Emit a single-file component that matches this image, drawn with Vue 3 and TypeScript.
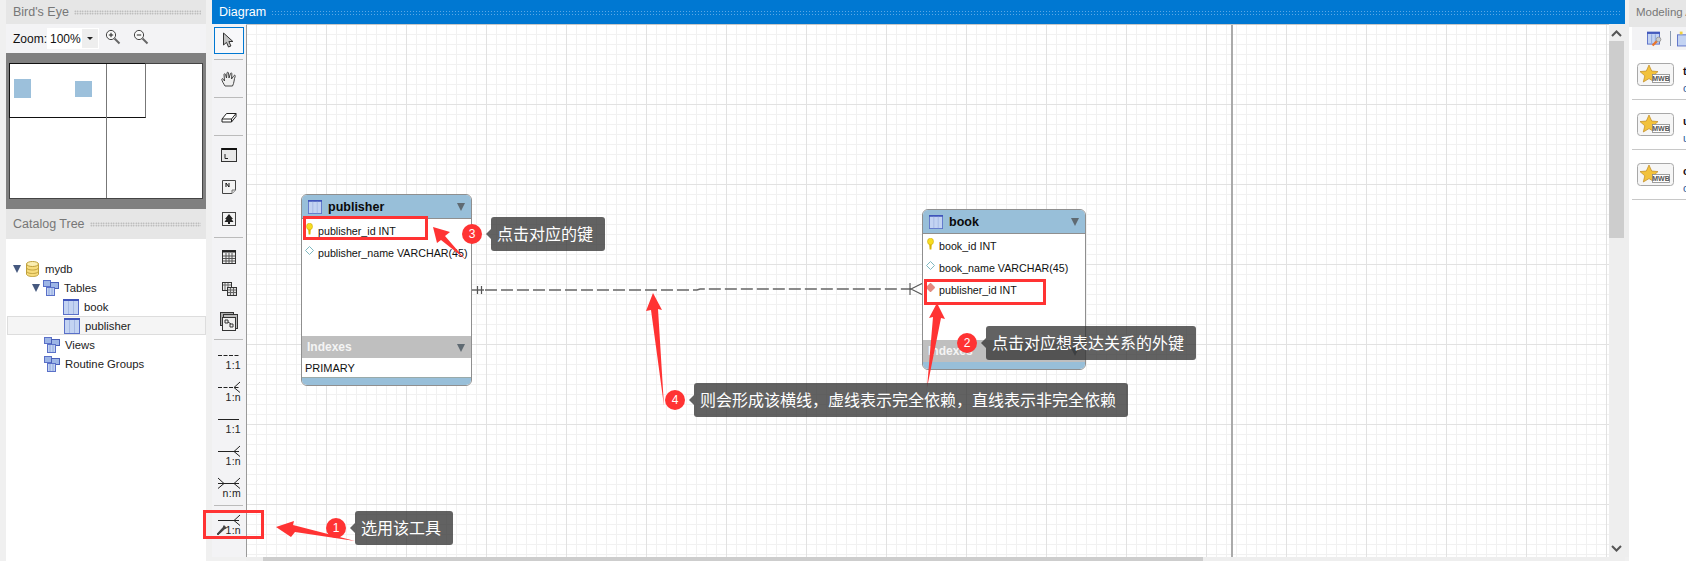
<script setup lang="ts">
interface Column { name: string; kind: 'key' | 'plain' | 'fk' }
interface TableNode { name: string; cls: string; columns: Column[]; indexes: string[] }

const tables: TableNode[] = [
  {
    name: 'publisher', cls: 'node-publisher',
    columns: [
      { name: 'publisher_id INT', kind: 'key' },
      { name: 'publisher_name VARCHAR(45)', kind: 'plain' },
    ],
    indexes: ['PRIMARY'],
  },
  {
    name: 'book', cls: 'node-book',
    columns: [
      { name: 'book_id INT', kind: 'key' },
      { name: 'book_name VARCHAR(45)', kind: 'plain' },
      { name: 'publisher_id INT', kind: 'fk' },
    ],
    indexes: [],
  },
]

const tips = [
  { n: 1, cls: 'tip-1', text: '选用该工具' },
  { n: 2, cls: 'tip-2', text: '点击对应想表达关系的外键' },
  { n: 3, cls: 'tip-3', text: '点击对应的键' },
  { n: 4, cls: 'tip-4', text: '则会形成该横线\uFF0C虚线表示完全依赖\uFF0C直线表示非完全依赖' },
]

const relations = [
  { label: '1:1', dashed: true, right: false, left: false },
  { label: '1:n', dashed: true, right: true, left: false },
  { label: '1:1', dashed: false, right: false, left: false },
  { label: '1:n', dashed: false, right: true, left: false },
  { label: 'n:m', dashed: false, right: true, left: true },
]

const additions = [
  { title: 'timestamps', sub: 'create_time' },
  { title: 'user', sub: 'username' },
  { title: 'category', sub: 'category_id' },
]
</script>

<template>
  <div class="app">
    <svg width="0" height="0" class="defs">
      <defs>
        <symbol id="tbl" viewBox="0 0 16 16">
          <rect x="0.5" y="0.5" width="15" height="15" fill="#c3d3f2" stroke="#5a70c8" />
          <rect x="0" y="0" width="16" height="2" fill="#3f55bb" />
          <path d="M5.5 2v13M10.5 2v13" stroke="#a4b8e4" fill="none" />
        </symbol>
        <symbol id="group" viewBox="0 0 16 16">
          <rect x="0.5" y="0.5" width="7" height="6" fill="#9db5e6" stroke="#5a70c8" />
          <rect x="7.5" y="2.500" width="8" height="6" fill="#9db5e6" stroke="#4a60b8" />
          <rect x="3.500" y="7.500" width="8" height="8" fill="#c3d3f2" stroke="#5a70c8" />
          <path d="M6 8v7M9 8v7" stroke="#8ea6dc" />
        </symbol>
        <symbol id="star-btn" viewBox="0 0 37 23">
          <rect x="0.5" y="0.5" width="36" height="22" rx="3" fill="#f6f6f6" stroke="#a8a8a8" />
          <path d="M12 2l2.700 6 6.300.6-4.800 4.200 1.500 6.200L12 15.600 6.300 19l1.500-6.200L3 8.600 9.300 8z" fill="#f2c23c" stroke="#c08a20" stroke-width="0.7" />
          <rect x="15.500" y="11.500" width="17" height="8" fill="#fff" stroke="#888" stroke-width="0.8" />
          <text x="24" y="18.300" text-anchor="middle" font-size="7" font-weight="700" fill="#555" font-family="Liberation Sans, sans-serif">MWB</text>
        </symbol>
      </defs>
    </svg>

    <aside class="left">
      <header class="panel-head"><span>Bird's Eye</span><i class="dots"></i></header>
      <div class="zoom-row">
        <span class="zoom-label">Zoom:</span>
        <div class="zoom-select"><span>100%</span><b class="zoom-btn"></b></div>
        <svg class="mag" width="16" height="16" viewBox="0 0 16 16">
          <circle cx="6" cy="6" r="4.600" fill="#f8f8f8" stroke="#444" />
          <path d="M3.800 6h4.400M6 3.800v4.400" stroke="#222" />
          <path d="M9.500 9.500l5 5" stroke="#666" stroke-width="2" />
        </svg>
        <svg class="mag mag-2" width="16" height="16" viewBox="0 0 16 16">
          <circle cx="6" cy="6" r="4.600" fill="#f8f8f8" stroke="#444" />
          <path d="M3.800 6h4.400" stroke="#222" />
          <path d="M9.500 9.500l5 5" stroke="#666" stroke-width="2" />
        </svg>
      </div>
      <div class="eye">
        <div class="eye-page">
          <i class="eye-view"></i>
          <i class="eye-fold"></i>
          <i class="eye-a"></i>
          <i class="eye-b"></i>
        </div>
      </div>
      <header class="panel-head tree-head"><span>Catalog Tree</span><i class="dots"></i></header>
      <div class="tree">
        <div class="row l0">
          <i class="tri"></i>
          <svg width="13" height="16" viewBox="0 0 13 16">
            <path d="M.5 3v10c0 1.500 2.600 2.500 6 2.500s6-1 6-2.500V3z" fill="#f7dc7c" stroke="#bfa03c" />
            <ellipse cx="6.500" cy="3" rx="6" ry="2.500" fill="#fbeeb0" stroke="#bfa03c" />
            <path d="M.5 6.500c0 1.500 2.600 2.500 6 2.500s6-1 6-2.500M.5 10c0 1.500 2.600 2.500 6 2.500s6-1 6-2.500" fill="none" stroke="#bfa03c" />
          </svg>
          <span>mydb</span>
        </div>
        <div class="row l1">
          <i class="tri"></i>
          <svg width="16" height="16"><use href="#group" /></svg>
          <span>Tables</span>
        </div>
        <div class="row l2"><svg width="16" height="16"><use href="#tbl" /></svg><span>book</span></div>
        <div class="row l2 selected"><svg width="16" height="16"><use href="#tbl" /></svg><span>publisher</span></div>
        <div class="row l1 no-tri"><svg width="16" height="16"><use href="#group" /></svg><span>Views</span></div>
        <div class="row l1 no-tri"><svg width="16" height="16"><use href="#group" /></svg><span>Routine Groups</span></div>
      </div>
    </aside>

    <main class="center">
      <header class="diagram-head"><span>Diagram</span><i class="dots light"></i></header>
      <div class="diagram-body">
        <nav class="toolbar">
          <div class="group first">
            <div class="tool">
              <div class="tool-active">
                <svg width="14" height="17" viewBox="0 0 14 17">
                  <path d="M1.500 1v12l3-2.600 2 4.600 2.400-1-2-4.500h4z" fill="#c4c4c4" stroke="#333" />
                </svg>
              </div>
            </div>
          </div>
          <div class="group">
            <div class="tool">
              <svg width="16" height="16" viewBox="0 0 16 16">
                <path d="M4 15C2.500 12.500 1 10 .8 8.500c0-1 1-1.200 1.700 0L3.500 10 3 3.500c0-1 1.300-1 1.500 0L5.500 7 6 2c0-1 1.400-1 1.500 0l.5 5L9.500 2.500c.2-.9 1.500-.7 1.400.3L10.500 8l2.500-3.500c.6-.7 1.700 0 1.200.9C13 8 13.300 12 11.500 15z" fill="#eee" stroke="#333" stroke-width=".9" />
              </svg>
            </div>
          </div>
          <div class="group">
            <div class="tool">
              <svg width="16" height="11" viewBox="0 0 16 11">
                <path d="M1 7l4.500-5.500H15L10.500 7zM1 7v3h9.500V7M10.500 10L15 4.500v-3" fill="#fff" stroke="#222" />
              </svg>
            </div>
          </div>
          <div class="group">
            <div class="tool">
              <svg width="16" height="14" viewBox="0 0 16 14">
                <rect x=".5" y=".5" width="15" height="13" fill="#e8e8e8" stroke="#333" />
                <path d="M1 1h15" stroke="#111" stroke-width="2" />
                <path d="M4 6v4.500h3" stroke="#222" fill="none" />
              </svg>
            </div>
            <div class="tool">
              <svg width="14" height="14" viewBox="0 0 14 14">
                <path d="M.5.5h13V10L10 13.500H.5z" fill="#f2f2f2" stroke="#444" />
                <path d="M4 7V3l3 4V3" stroke="#111" fill="none" />
                <path d="M10 13.500V10h3.500" fill="#ddd" stroke="#777" />
              </svg>
            </div>
            <div class="tool">
              <svg width="14" height="14" viewBox="0 0 14 14">
                <rect x=".5" y=".5" width="13" height="13" fill="#f2f2f2" stroke="#444" />
                <path d="M7 2l4 5h-1.500l2 3H8v2H6v-2H2.500l2-3H3z" fill="#222" />
              </svg>
            </div>
          </div>
          <div class="group">
            <div class="tool">
              <svg width="14" height="14" viewBox="0 0 14 14">
                <rect x=".5" y=".5" width="13" height="13" fill="#eee" stroke="#333" />
                <path d="M0 1.500h14" stroke="#222" stroke-width="2" />
                <path d="M1 6h12M1 8.500h12M1 11h12M4 3v10M7 3v10M10 3v10" stroke="#555" />
              </svg>
            </div>
            <div class="tool">
              <svg width="15" height="14" viewBox="0 0 15 14">
                <rect x=".5" y=".5" width="9" height="8" fill="#eee" stroke="#333" />
                <rect x="5.500" y="5.500" width="9" height="8" fill="#ddd" stroke="#333" />
                <path d="M1 3h8M3 1v7M6 1v4M6 8h8M6 10.500h8M8.500 6v7M11.500 6v7" stroke="#666" />
              </svg>
            </div>
            <div class="tool">
              <svg width="18" height="19" viewBox="0 0 18 19">
                <rect x=".5" y=".5" width="13" height="13" fill="#aaa" stroke="#333" />
                <rect x="3.500" y="2.500" width="14" height="14" fill="#bbb" stroke="#333" />
                <rect x="2.500" y="5.500" width="13" height="13" fill="#f0f0f0" stroke="#333" />
                <path d="M5 8h3v3H5zM10 12h3v3h-3zM8 10l3 2" fill="none" stroke="#333" />
              </svg>
            </div>
          </div>
          <div class="group">
            <div v-for="(r, i) in relations" :key="i" class="tool">
              <svg width="34" height="32" viewBox="0 0 34 32">
                <path d="M6 12.500h21" stroke="#222" :stroke-dasharray="r.dashed ? '4 1.500' : undefined" />
                <path v-if="r.right" d="M28 7l-6 5.500 6 5" fill="none" stroke="#222" />
                <path v-if="r.left" d="M6 7l6 5.500-6 5" fill="none" stroke="#222" />
                <text x="29" y="26" text-anchor="end" class="rel-label">{{ r.label }}</text>
              </svg>
            </div>
          </div>
          <div class="group last">
            <div class="tool">
              <svg width="34" height="32" viewBox="0 0 34 32">
                <path d="M6 11.500h21" stroke="#222" />
                <path d="M28 6l-6 5.500 6 5" fill="none" stroke="#222" />
                <path d="M5 25l6-6.500 1-2 2.500 2.500-2 1L6 26z" fill="#444" stroke="#222" stroke-width=".6" />
                <text x="29" y="25" text-anchor="end" class="rel-label">1:n</text>
              </svg>
            </div>
          </div>
        </nav>

        <section class="canvas">
          <i class="page-fold"></i>
          <article v-for="t in tables" :key="t.name" class="node" :class="t.cls">
            <header class="node-head">
              <svg width="14" height="14"><use href="#tbl" /></svg>
              <strong>{{ t.name }}</strong>
              <i class="caret"></i>
            </header>
            <div class="node-cols">
              <div v-for="c in t.columns" :key="c.name" class="col">
                <svg class="col-icon" width="9" height="12" viewBox="0 0 9 12">
                  <template v-if="c.kind === 'key'">
                    <path d="M3.200 6h2.600l-.4 5.500H3.600z" fill="#d9b400" />
                    <ellipse cx="4.500" cy="3.500" rx="3" ry="3.300" fill="#f7dd20" stroke="#d1ac10" stroke-width=".6" />
                  </template>
                  <path v-else-if="c.kind === 'plain'" d="M4.500 1.500L8.500 5.500 4.500 9.500.5 5.500z" fill="#fff" stroke="#7fb8c0" />
                  <path v-else d="M4.500 1L9 5.500 4.500 10 0 5.500z" fill="#e58a80" stroke="#c96a60" stroke-width=".5" />
                </svg>
                <span>{{ c.name }}</span>
              </div>
            </div>
            <div class="node-index-head">
              <strong>Indexes</strong>
              <i class="caret"></i>
            </div>
            <div v-if="t.indexes.length" class="node-index">
              <div v-for="ix in t.indexes" :key="ix">{{ ix }}</div>
            </div>
            <footer class="node-foot"></footer>
          </article>

          <svg class="wire" width="460" height="24" viewBox="0 0 460 24">
            <path d="M0 12h12" stroke="#666" stroke-width="1.500" />
            <path d="M5.500 8v8M9.500 8v8" stroke="#555" stroke-width="1.200" />
            <path d="M13 12h212l3-1h211" stroke="#666" stroke-width="1.600" fill="none" stroke-dasharray="12 4" />
            <path d="M438 5v12M450 5.500l-11 5.500 11 5.500" stroke="#555" stroke-width="1.100" fill="none" />
          </svg>
        </section>

        <div class="vscroll">
          <svg width="11" height="7" viewBox="0 0 11 7" class="chev-up"><path d="M1 6l4.500-4.500L10 6" fill="none" stroke="#555" stroke-width="2" /></svg>
          <div class="vthumb"></div>
          <svg width="11" height="7" viewBox="0 0 11 7" class="chev-down"><path d="M1 1l4.500 4.500L10 1" fill="none" stroke="#555" stroke-width="2" /></svg>
        </div>
      </div>
      <div class="hscroll"><div class="hthumb"></div></div>
    </main>

    <aside class="right">
      <header class="right-head"><span>Modeling Additions</span></header>
      <div class="right-tools">
        <svg width="16" height="16" viewBox="0 0 16 16">
          <rect x=".5" y=".5" width="13" height="13" fill="#c3d3f2" stroke="#5a70c8" />
          <path d="M0 1.500h14" stroke="#3f55bb" stroke-width="2" />
          <path d="M5 3v10M9 3v10" stroke="#8ea6dc" />
          <path d="M6 15l5-5" stroke="#e8772e" stroke-width="2.500" />
          <circle cx="12.500" cy="8.500" r="2.500" fill="#ccc" stroke="#999" />
        </svg>
        <i class="right-sep"></i>
        <svg width="10" height="16" viewBox="0 0 10 16">
          <rect x=".5" y="3.500" width="12" height="12" fill="#c3d3f2" stroke="#5a70c8" />
          <path d="M3 0h3v3H3z" fill="#f2d23c" />
        </svg>
      </div>
      <div v-for="a in additions" :key="a.title" class="addition">
        <svg width="37" height="23"><use href="#star-btn" /></svg>
        <div class="addition-text">
          <strong>{{ a.title }}</strong>
          <span>{{ a.sub }}</span>
        </div>
      </div>
    </aside>

    <svg class="marks" width="1686" height="561" viewBox="0 0 1686 561">
      <g fill="none" stroke="#f33" stroke-width="3">
        <rect x="304.500" y="217.500" width="122" height="21" />
        <rect x="925.500" y="280.500" width="119" height="23" />
        <rect x="204.500" y="511.500" width="58" height="26" />
      </g>
      <g fill="#f33">
        <polygon points="276,527 294,521 293,525 355,541 295,532 291,537" />
        <polygon points="433,227 450,232 445,236 465,259 441,240 437,243" />
        <polygon points="937,303 945,319 941,318 927,388 933,317 929,318" />
        <polygon points="653,293 662,310 658,309 664,406 651,310 646,311" />
      </g>
    </svg>

    <div v-for="t in tips" :key="t.n" class="tip" :class="t.cls">
      <b class="badge">{{ t.n }}</b>
      <span class="tip-box">{{ t.text }}</span>
    </div>
  </div>
</template>

<style scoped>
.app {
  position: relative;
  display: flex;
  width: 1686px;
  height: 561px;
  overflow: hidden;
  background: #f0f0f0;
  font-family: "Liberation Sans", Arial, sans-serif;
  font-size: 11.300px;
  color: #222;
}
.defs { position: absolute; }

/* left column */
.left {
  display: flex;
  flex-direction: column;
  width: 200px;
  margin-left: 6px;
  flex: none;
}
.panel-head {
  display: flex;
  align-items: center;
  height: 24px;
  padding-left: 7px;
  background: #e6e6e6;
  color: #777;
  font-size: 12.500px;
  white-space: nowrap;
}
.dots {
  flex: 1;
  height: 5px;
  margin: 0 5px 0 5px;
  background-image: radial-gradient(circle, #a8a8a8 .7px, transparent .9px);
  background-size: 2.500px 2.500px;
}
.dots.light {
  background-image: radial-gradient(circle, #5aa7e6 .8px, transparent 1px);
  background-size: 3px 3px;
  margin-right: 4px;
}
.zoom-row {
  display: flex;
  align-items: center;
  height: 29px;
  padding-left: 7px;
  background: #f3f3f5;
  font-size: 12px;
}
.zoom-label { width: 34px; color: #111; }
.zoom-select {
  display: flex;
  align-items: center;
  justify-content: space-between;
  width: 52px;
  height: 21px;
  padding-left: 3px;
  box-sizing: border-box;
  background: #fff;
  color: #111;
}
.zoom-btn {
  position: relative;
  width: 16px;
  height: 19px;
  margin-right: 1px;
  background: #eee;
}
.zoom-btn::after {
  content: "";
  position: absolute;
  left: 5px;
  top: 8px;
  border: 3px solid transparent;
  border-top: 3px solid #222;
}
.mag { margin-left: 6px; margin-top: -4px; }
.mag-2 { margin-left: 12px; }
.eye {
  height: 156px;
  padding: 10px 3px;
  box-sizing: border-box;
  background: #808080;
}
.eye-page {
  position: relative;
  height: 136px;
  box-sizing: border-box;
  background: #fff;
  border: 1px solid #444;
}
.eye-view {
  position: absolute;
  left: -1px;
  top: -1px;
  width: 137px;
  height: 55px;
  box-sizing: border-box;
  border: 1px solid #111;
  border-right-color: #777;
}
.eye-fold {
  position: absolute;
  left: 96px;
  top: 0;
  bottom: 0;
  width: 1px;
  background: #777;
}
.eye-a, .eye-b {
  position: absolute;
  background: #9cc0db;
}
.eye-a { left: 4px; top: 15px; width: 17px; height: 19px; }
.eye-b { left: 65px; top: 17px; width: 17px; height: 16px; }
.tree-head { height: 30px; }
.tree {
  flex: 1;
  padding-top: 20px;
  background: #fff;
}
.row {
  position: relative;
  display: flex;
  align-items: center;
  height: 19px;
  box-sizing: border-box;
  white-space: nowrap;
}
.row svg { flex: none; margin-right: 5px; }
.tri {
  width: 0;
  height: 0;
  margin-right: 3px;
  border-left: 4px solid transparent;
  border-right: 4px solid transparent;
  border-top: 8px solid #46597f;
}
.l0 { padding-left: 7px; }
.l0 svg { margin: 0 6px 0 2px; }
.l1 { padding-left: 26px; }
.l1 svg { margin-right: 5px; }
.l1.no-tri { padding-left: 38px; }
.l2 { padding-left: 57px; }
.selected {
  margin: 0 0 0 1px;
  padding-left: 56px;
  background: #f5f5f5;
  border: 1px solid #ddd;
  border-right-color: #ddd;
}

/* diagram */
.center {
  display: flex;
  flex-direction: column;
  width: 1417px;
  margin-left: 6px;
  flex: none;
}
.diagram-head {
  display: flex;
  align-items: center;
  height: 24px;
  margin-right: 4px;
  padding-left: 7px;
  background: #0078d2;
  color: #fff;
  font-size: 12.500px;
}
.diagram-body {
  display: flex;
  height: 533px;
}
.toolbar {
  width: 34px;
  flex: none;
  background: #f3f3f5;
}
.group {
  padding: 3px 0;
  border-top: 0;
  position: relative;
}
.group + .group::before {
  content: "";
  position: absolute;
  left: 2px;
  right: 3px;
  top: -1px;
  height: 1px;
  background: #bbb;
}
.group.first { padding: 0 0 4px; }
.tool {
  display: flex;
  align-items: center;
  justify-content: center;
  height: 32px;
}
.tool-active {
  display: flex;
  align-items: center;
  justify-content: center;
  width: 30px;
  height: 27px;
  box-sizing: border-box;
  border: 1px solid #0078d2;
  background: #f8f8fa;
}
.rel-label {
  font-size: 10.500px;
  fill: #222;
  font-family: "Liberation Sans", Arial, sans-serif;
  letter-spacing: .3px;
}
.canvas {
  position: relative;
  width: 1363px;
  flex: none;
  border-top: 1px solid #c8c8c8;
  box-sizing: border-box;
  background-color: #fff;
  background-image:
    linear-gradient(to right, #e2e2e2 1px, transparent 1px),
    linear-gradient(to bottom, #e2e2e2 1px, transparent 1px),
    linear-gradient(to right, #f1f1f1 1px, transparent 1px),
    linear-gradient(to bottom, #f1f1f1 1px, transparent 1px);
  background-size: 80px 80px, 80px 80px, 10px 10px, 10px 10px;
  background-position: 0 -1px, 0 -1px, 0 -1px, 0 -1px;
  overflow: hidden;
  box-shadow: inset 1px 0 0 #9a9a9a;
}
.page-fold {
  position: absolute;
  left: 985px;
  top: 0;
  bottom: 0;
  width: 2px;
  background: #aaa;
}
.node {
  position: absolute;
  display: flex;
  flex-direction: column;
  box-sizing: border-box;
  border: 1px solid #8f8f8f;
  border-radius: 6px;
  overflow: hidden;
  background: #fff;
}
.node-publisher { left: 55px; top: 169px; width: 171px; height: 192px; }
.node-book { left: 676px; top: 184px; width: 164px; height: 161px; }
.node-head {
  position: relative;
  display: flex;
  align-items: center;
  flex: none;
  height: 23px;
  padding-left: 6px;
  background: #98bfd9;
  color: #0a0a0a;
  font-size: 12.500px;
}
.node-head strong { margin-left: 6px; padding-top: 1px; }
.caret {
  position: absolute;
  right: 6px;
  top: 8px;
  width: 0;
  height: 0;
  border-left: 4.500px solid transparent;
  border-right: 4.500px solid transparent;
  border-top: 8px solid #5f6a72;
}
.node-cols {
  flex: 1;
  padding-top: 1px;
  border-top: 1px solid #8f8f8f;
}
.col {
  position: relative;
  display: flex;
  align-items: center;
  height: 22px;
  padding-left: 16px;
  white-space: nowrap;
  color: #111;
  font-size: 10.700px;
}
.col-icon { position: absolute; left: 3px; top: 3px; }
.node-index-head {
  position: relative;
  flex: none;
  height: 22px;
  line-height: 22px;
  padding-left: 5px;
  background: #bfbfbf;
  color: #f4f4f4;
  font-size: 12px;
}
.node-index {
  flex: none;
  height: 20px;
  line-height: 20px;
  padding-left: 3px;
  box-sizing: border-box;
  border-bottom: 1px solid #9aa;
  color: #111;
  font-size: 11px;
}
.node-foot {
  flex: none;
  height: 7px;
  background: #98bfd9;
}
.wire {
  position: absolute;
  left: 226px;
  top: 253px;
}
.vscroll {
  position: relative;
  display: flex;
  flex-direction: column;
  align-items: flex-start;
  width: 20px;
  flex: none;
  background: #eee;
}
.vthumb {
  width: 15px;
  height: 197px;
  margin-top: 17px;
  background: #cdcdcd;
}
.chev-up { position: absolute; left: 2px; top: 6px; }
.chev-down { position: absolute; left: 2px; top: 521px; }
.hscroll {
  height: 4px;
  margin-left: 34px;
  margin-right: 4px;
  background: #eee;
}
.hthumb {
  width: 940px;
  height: 4px;
  margin-left: 17px;
  background: #cdcdcd;
}

/* right column */
.right {
  flex: 1;
  min-width: 0;
  overflow: hidden;
  background: #fff;
}
.right-head {
  height: 27px;
  line-height: 24px;
  padding-left: 7px;
  background: #e6e6e6;
  color: #777;
  font-size: 11.500px;
  white-space: nowrap;
}
.right-tools {
  display: flex;
  align-items: center;
  height: 23px;
  margin-left: 3px;
  padding-left: 15px;
  background: #f3f3f5;
}
.right-sep {
  width: 1px;
  height: 15px;
  margin: 0 6px 0 8px;
  background: #8a9bb0;
}
.addition {
  display: flex;
  height: 50px;
  padding: 13px 0 0 5px;
  margin-left: 3px;
  box-sizing: border-box;
  border-bottom: 1px solid #c8c8c8;
  white-space: nowrap;
}
.addition svg { flex: none; }
.addition-text {
  display: flex;
  flex-direction: column;
  margin-left: 9px;
  line-height: 17px;
  font-size: 11px;
}
.addition-text strong { color: #1a1020; }
.addition-text span { color: #2a5a9a; }

/* annotations */
.marks {
  position: absolute;
  left: 0;
  top: 0;
  pointer-events: none;
}
.tip {
  position: absolute;
  display: flex;
  align-items: center;
  height: 34px;
  font-family: "Noto Sans CJK SC", "Noto Sans", sans-serif;
  white-space: nowrap;
}
.badge {
  display: flex;
  align-items: center;
  justify-content: center;
  width: 20px;
  height: 20px;
  margin-right: 9px;
  border-radius: 50%;
  background: #f33;
  color: #fff;
  font: 400 12px "Liberation Sans", sans-serif;
}
.tip-box {
  position: relative;
  height: 34px;
  line-height: 33px;
  padding: 0 12px 0 6px;
  border-radius: 3px;
  background: rgba(51, 51, 51, .77);
  color: #fff;
  font-size: 16px;
}
.tip-box::before {
  content: "";
  position: absolute;
  left: -5px;
  top: 12px;
  width: 0;
  height: 0;
  border-top: 5px solid transparent;
  border-bottom: 5px solid transparent;
  border-right: 5px solid rgba(51, 51, 51, .77);
}
.tip-1 { left: 326px; top: 511px; }
.tip-2 { left: 957px; top: 326px; }
.tip-3 { left: 462px; top: 217px; }
.tip-4 { left: 665px; top: 383px; }
</style>
